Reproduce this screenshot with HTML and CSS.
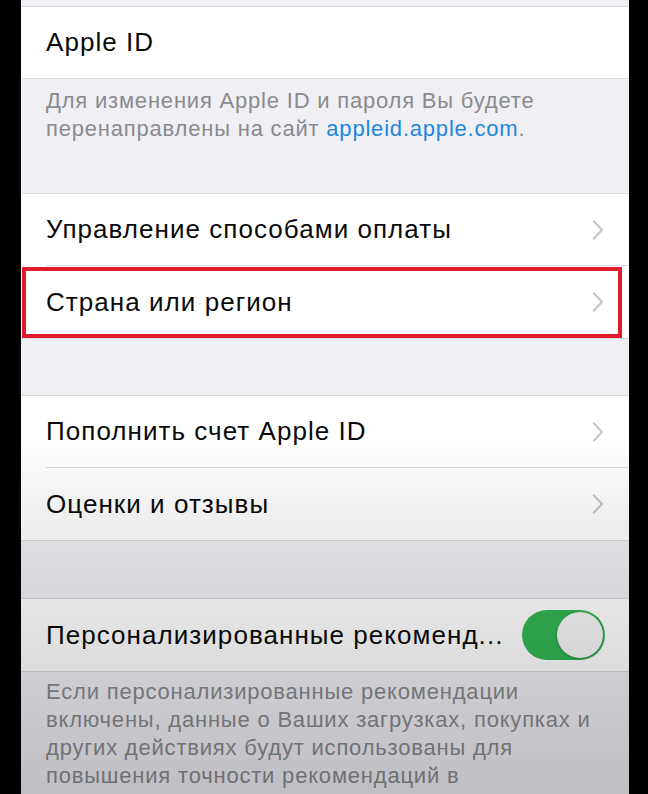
FILE: index.html
```html
<!DOCTYPE html>
<html lang="ru">
<head>
<meta charset="utf-8">
<link rel="stylesheet" href="styles.css">
</head>
<body>
<div class="screen">
  <div class="top-strip"></div>
  <div class="group">
    <div class="row row-short"><span class="label">Apple ID</span></div>
  </div>
  <div class="footer footer-first">Для изменения Apple ID и пароля Вы будете<br>перенаправлены на сайт <a class="link">appleid.apple.com</a>.</div>
  <div class="group">
    <div class="row"><span class="label">Управление способами оплаты</span><span class="chev"><svg viewBox="0 0 12 20" width="12" height="20"><path d="M2 1.5 L10 10 L2 18.5" fill="none" stroke="#c5c5ca" stroke-width="2.2" stroke-linecap="round" stroke-linejoin="round"/></svg></span></div>
    <div class="row highlighted"><span class="label">Страна или регион</span><span class="chev"><svg viewBox="0 0 12 20" width="12" height="20"><path d="M2 1.5 L10 10 L2 18.5" fill="none" stroke="#c5c5ca" stroke-width="2.2" stroke-linecap="round" stroke-linejoin="round"/></svg></span><span class="mark"></span></div>
  </div>
  <div class="gap"></div>
  <div class="group">
    <div class="row"><span class="label">Пополнить счет Apple ID</span><span class="chev"><svg viewBox="0 0 12 20" width="12" height="20"><path d="M2 1.5 L10 10 L2 18.5" fill="none" stroke="#c5c5ca" stroke-width="2.2" stroke-linecap="round" stroke-linejoin="round"/></svg></span></div>
    <div class="row"><span class="label">Оценки и отзывы</span><span class="chev"><svg viewBox="0 0 12 20" width="12" height="20"><path d="M2 1.5 L10 10 L2 18.5" fill="none" stroke="#c5c5ca" stroke-width="2.2" stroke-linecap="round" stroke-linejoin="round"/></svg></span></div>
  </div>
  <div class="gap gap-2"></div>
  <div class="group">
    <div class="row"><span class="label">Персонализированные рекоменд...</span><span class="toggle"><span class="knob"></span></span></div>
  </div>
  <div class="footer footer-second">Если персонализированные рекомендации<br>включены, данные о Ваших загрузках, покупках и<br>других действиях будут использованы для<br>повышения точности рекомендаций в</div>
  <div class="shade"></div>
</div>
</body>
</html>
```
FILE: styles.css
```css
html, body {
  margin: 0;
  padding: 0;
  background: #000;
  height: 794px;
  overflow: hidden;
}
.screen {
  position: relative;
  width: 608px;
  height: 794px;
  margin-left: 21px;
  background: #efeff4;
  overflow: hidden;
  font-family: "Liberation Sans", Arial, sans-serif;
}
.top-strip {
  height: 6px;
}
.group {
  background: #fff;
  border-top: 1px solid #d9d9de;
  border-bottom: 1px solid #d9d9de;
}
.row {
  position: relative;
  height: 72px;
  margin-left: 25px;
  padding-right: 25px;
  display: flex;
  align-items: center;
  justify-content: space-between;
  box-sizing: border-box;
  border-bottom: 1px solid #dcdce0;
}
.row:last-child {
  border-bottom: none;
}
.row-short {
  height: 71px;
}
.label {
  font-size: 26px;
  color: #0a0a0a;
  letter-spacing: 1.05px;
  white-space: nowrap;
}
.chev {
  display: flex;
}
.highlighted .mark {
  position: absolute;
  left: -24px;
  right: 7px;
  top: 1px;
  bottom: 0;
  border: 4px solid #e01c2c;
}
.footer {
  padding: 8px 25px 0;
  font-size: 22px;
  line-height: 28px;
  letter-spacing: 0.8px;
  color: #8a8a8f;
  white-space: nowrap;
}
.footer-first {
  height: 106px;
}
.footer-second {
  padding-top: 6px;
}
.link {
  color: #2088dc;
}
.gap {
  height: 56px;
}
.gap-2 {
  height: 57px;
}
.toggle {
  position: relative;
  width: 83px;
  height: 50px;
  border-radius: 25px;
  background: #31b553;
  margin-right: -1px;
  flex-shrink: 0;
}
.knob {
  position: absolute;
  right: 2px;
  top: 2px;
  width: 46px;
  height: 46px;
  border-radius: 50%;
  background: #f7f7f7;
  box-shadow: 0 1px 3px rgba(0,0,0,0.25);
}
.shade {
  position: absolute;
  left: 0;
  top: 0;
  right: 0;
  bottom: 0;
  pointer-events: none;
  background: linear-gradient(to bottom, rgba(0,0,0,0) 0, rgba(0,0,0,0) 440px, rgba(0,0,0,0.06) 510px, rgba(0,0,0,0.1) 600px, rgba(0,0,0,0.2) 794px);
}
```
